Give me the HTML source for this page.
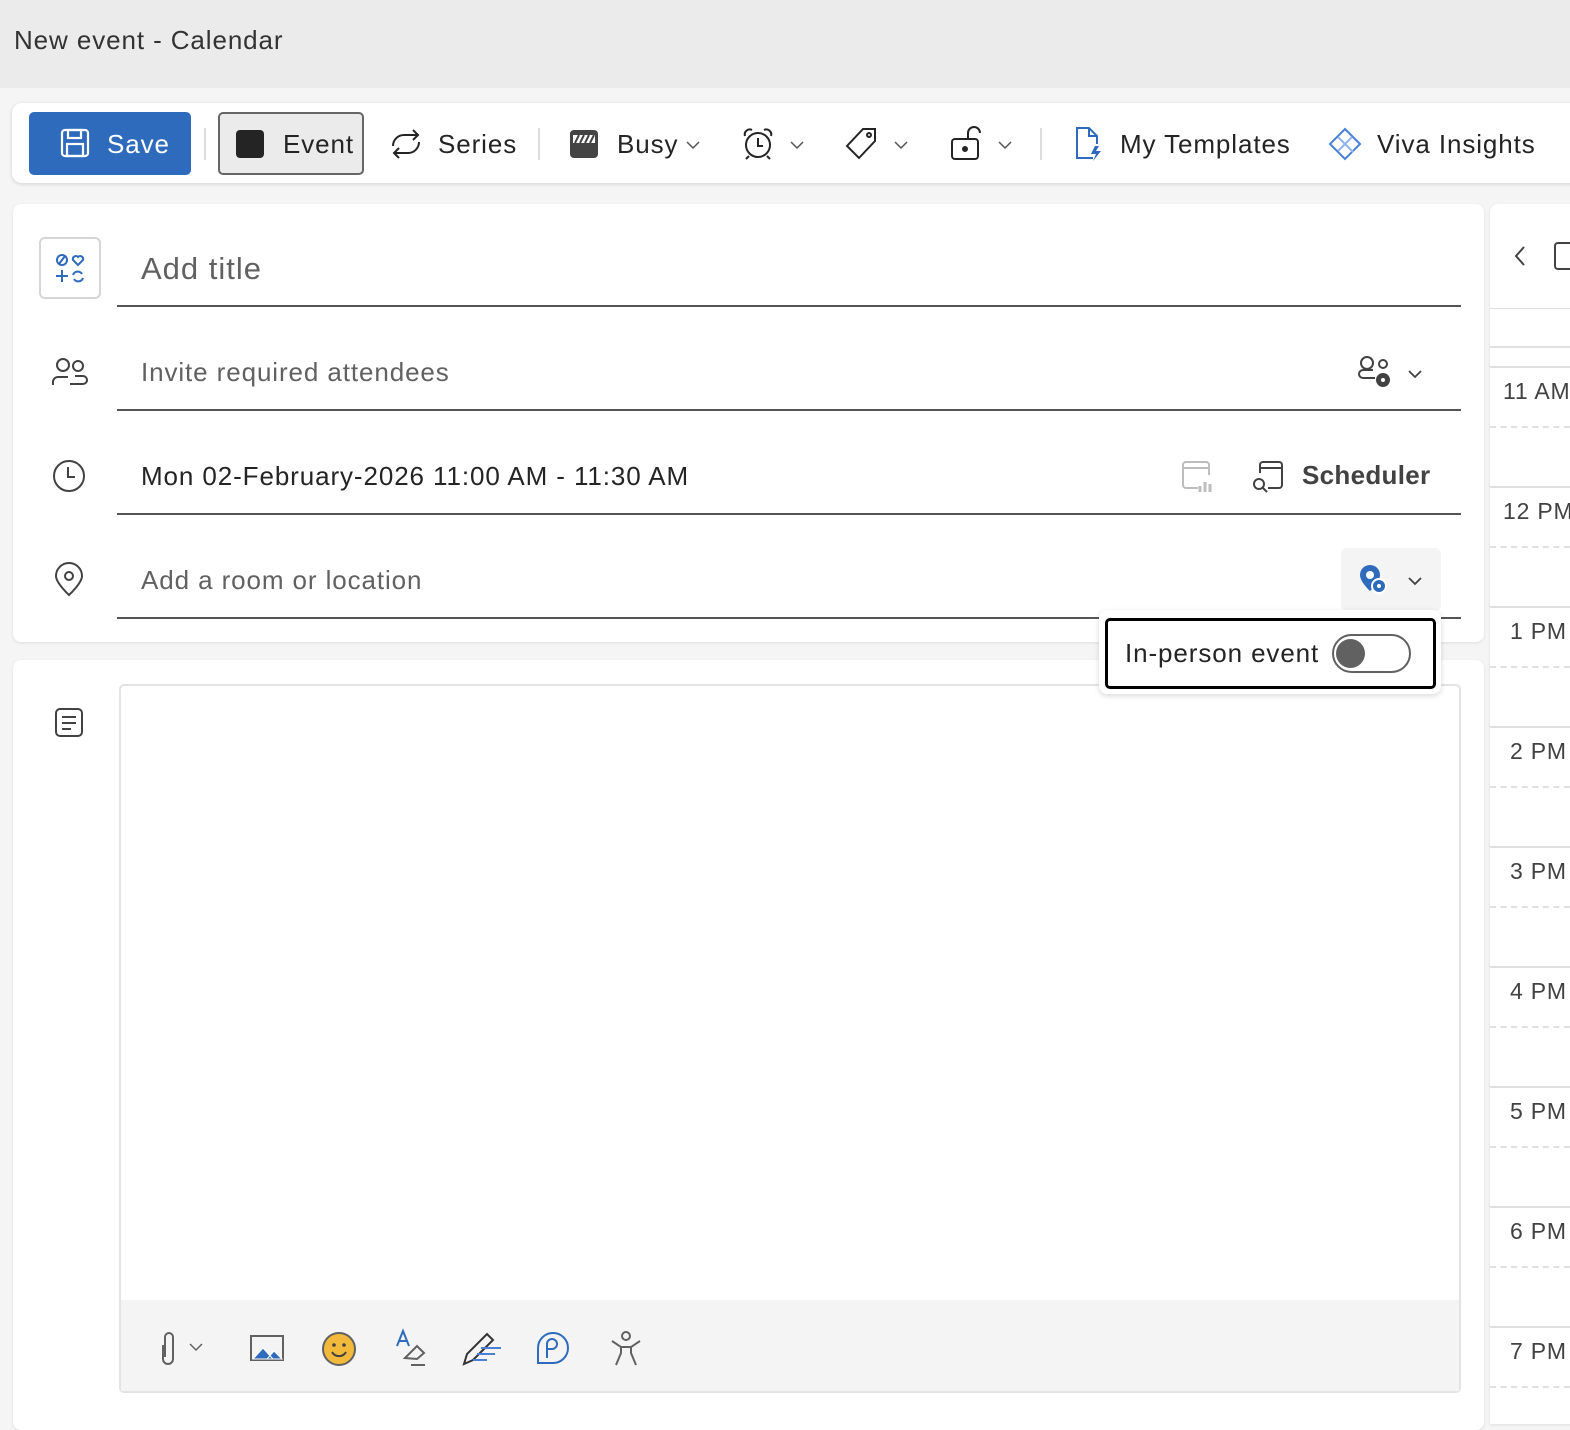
<!DOCTYPE html>
<html><head><meta charset="utf-8"><style>
*{box-sizing:border-box;margin:0;padding:0}
body{width:1570px;height:1414px;overflow:hidden;background:#f5f5f5;font-family:"Liberation Sans",sans-serif;position:relative;color:#242424}
.a{position:absolute}
.t{font-size:26px;white-space:nowrap;letter-spacing:0.9px}
svg{position:absolute;overflow:visible}
</style></head><body>
<div class="a" style="left:0;top:0;width:1570px;height:88px;background:#ebebeb"></div>
<div class="a t" style="left:14px;top:25px;color:#333">New event - Calendar</div>

<div class="a" style="left:12px;top:103px;width:1570px;height:80px;background:#fff;border-radius:10px;box-shadow:0 1px 4px rgba(0,0,0,.15)"></div>
<div class="a" style="left:29px;top:112px;width:162px;height:63px;background:#2f6bbd;border-radius:5px"></div>
<svg style="left:60px;top:128px" width="30" height="30" fill="none" stroke="#fff" stroke-width="2.2"><rect x="2" y="2" width="26" height="26" rx="3"/><rect x="8" y="2" width="13" height="8"/><rect x="7" y="16" width="16" height="12"/></svg>
<div class="a t" style="left:107px;top:129px;color:#fff">Save</div>
<div class="a" style="left:204px;top:128px;width:2px;height:32px;background:#ddd"></div>
<div class="a" style="left:218px;top:112px;width:146px;height:63px;background:#ebebeb;border:2px solid #666;border-radius:5px"></div>
<div class="a" style="left:236px;top:130px;width:28px;height:28px;background:#242424;border-radius:4px"></div>
<div class="a t" style="left:283px;top:129px">Event</div>
<svg style="left:389px;top:128px" width="34" height="32" fill="none" stroke="#242424" stroke-width="2"><path d="M4 18a11 11 0 0 1 11-11h14M24 2l5 5-5 5M30 14a11 11 0 0 1-11 11H5M10 30l-5-5 5-5"/></svg>
<div class="a t" style="left:438px;top:129px">Series</div>
<div class="a" style="left:538px;top:128px;width:2px;height:32px;background:#ddd"></div>
<svg style="left:569px;top:129px" width="30" height="30"><rect x="1" y="1" width="28" height="28" rx="4" fill="#444"/><rect x="4" y="6" width="22" height="8" fill="#fff"/><path d="M6 14l4-8M11 14l4-8M16 14l4-8M21 14l4-8" stroke="#444" stroke-width="2"/></svg>
<div class="a t" style="left:617px;top:129px">Busy</div>
<svg style="left:686px;top:140px" width="14" height="10" fill="none" stroke="#555" stroke-width="1.5"><path d="M1 2l6 6 6-6"/></svg>
<svg style="left:741px;top:127px" width="34" height="34" fill="none" stroke="#242424" stroke-width="2"><circle cx="17" cy="18" r="12"/><path d="M17 11v8h5M4 9a5 5 0 0 1 7-6M30 9a5 5 0 0 0-7-6M8 29l-3 3M26 29l3 3"/></svg>
<svg style="left:790px;top:140px" width="14" height="10" fill="none" stroke="#555" stroke-width="1.5"><path d="M1 2l6 6 6-6"/></svg>
<svg style="left:845px;top:127px" width="34" height="34" fill="none" stroke="#242424" stroke-width="2"><path d="M18 2h12v12L14 31 2 19z"/><circle cx="24" cy="8" r="2"/></svg>
<svg style="left:894px;top:140px" width="14" height="10" fill="none" stroke="#555" stroke-width="1.5"><path d="M1 2l6 6 6-6"/></svg>
<svg style="left:950px;top:125px" width="32" height="36" fill="none" stroke="#242424" stroke-width="2"><rect x="2" y="14" width="26" height="20" rx="3"/><path d="M18 14V8a6 6 0 0 1 12 0"/><circle cx="15" cy="24" r="2" fill="#242424"/></svg>
<svg style="left:998px;top:140px" width="14" height="10" fill="none" stroke="#555" stroke-width="1.5"><path d="M1 2l6 6 6-6"/></svg>
<div class="a" style="left:1040px;top:128px;width:2px;height:32px;background:#ddd"></div>
<svg style="left:1073px;top:126px" width="30" height="36" fill="none" stroke="#2f6bbd" stroke-width="2"><path d="M20 32H4V2h12l8 8v8M16 2v8h8"/><path d="M22 20l-4 8h5l-3 7 8-10h-5l3-5z" fill="#2f6bbd" stroke="none"/></svg>
<div class="a t" style="left:1120px;top:129px">My Templates</div>
<svg style="left:1328px;top:127px" width="34" height="34" fill="none" stroke="#4a7fd9" stroke-width="2"><path d="M17 2l15 15-15 15L2 17z"/><path d="M10 10l15 15M24 10L10 24" stroke="#8fb3ee"/></svg>
<div class="a t" style="left:1377px;top:129px">Viva Insights</div>

<div class="a" style="left:13px;top:204px;width:1471px;height:438px;background:#fff;border-radius:8px;box-shadow:0 1px 3px rgba(0,0,0,.1)"></div>
<div class="a" style="left:39px;top:237px;width:62px;height:62px;border:2px solid #d6d6d6;border-radius:6px"></div>
<svg style="left:54px;top:252px" width="32" height="32" fill="none" stroke="#2f6bbd" stroke-width="2"><circle cx="8" cy="8" r="5"/><path d="M5 12l6-8"/><path d="M24 13l-5-5a3 3 0 0 1 5-3 3 3 0 0 1 5 3z"/><path d="M8 18v12M2 24h12M19 23a5 5 0 0 1 9-1M29 26a5 5 0 0 1-9 1"/></svg>
<div class="a" style="left:141px;top:251px;font-size:31px;color:#616161;letter-spacing:1px">Add title</div>
<div class="a" style="left:117px;top:305px;width:1344px;height:2px;background:#555"></div>

<svg style="left:52px;top:357px" width="36" height="30" fill="none" stroke="#424242" stroke-width="2"><circle cx="11" cy="8" r="6"/><path d="M1 28v-3a5 5 0 0 1 5-5h10"/><circle cx="26" cy="9" r="5"/><path d="M18 27h13a4 4 0 0 0 0-8h-8"/></svg>
<div class="a t" style="left:141px;top:357px;color:#616161">Invite required attendees</div>
<svg style="left:1357px;top:356px" width="36" height="32" fill="none" stroke="#424242" stroke-width="2"><circle cx="10" cy="7" r="6"/><circle cx="26" cy="8" r="4"/><path d="M18 22H6a4 4 0 0 1 0-8h10"/><circle cx="26" cy="24" r="6" fill="#424242"/><circle cx="26" cy="24" r="2" fill="#fff" stroke="none"/></svg>
<svg style="left:1408px;top:369px" width="14" height="10" fill="none" stroke="#424242" stroke-width="1.8"><path d="M1 2l6 6 6-6"/></svg>
<div class="a" style="left:117px;top:409px;width:1344px;height:2px;background:#555"></div>

<svg style="left:52px;top:459px" width="34" height="34" fill="none" stroke="#424242" stroke-width="2"><circle cx="17" cy="17" r="15"/><path d="M16 8v10h7"/></svg>
<div class="a t" style="left:141px;top:461px">Mon 02-February-2026 11:00 AM - 11:30 AM</div>
<svg style="left:1182px;top:461px" width="32" height="32" fill="none" stroke="#bdbdbd" stroke-width="2"><path d="M16 27H4a3 3 0 0 1-3-3V4a3 3 0 0 1 3-3h20a3 3 0 0 1 3 3v10M1 7h26"/><path d="M18 31v-6M23 31v-10M28 31v-8" stroke-width="3"/></svg>
<svg style="left:1252px;top:461px" width="32" height="32" fill="none" stroke="#424242" stroke-width="2"><path d="M8 12V4a3 3 0 0 1 3-3h16a3 3 0 0 1 3 3v20a3 3 0 0 1-3 3H16M8 7h22"/><circle cx="7" cy="23" r="5"/><path d="M11 27l4 4"/></svg>
<div class="a t" style="left:1302px;top:460px;font-weight:bold;color:#424242;letter-spacing:0.3px">Scheduler</div>
<div class="a" style="left:117px;top:513px;width:1344px;height:2px;background:#555"></div>

<svg style="left:54px;top:563px" width="30" height="34" fill="none" stroke="#424242" stroke-width="2"><path d="M15 32S2 20 2 13a13 13 0 0 1 26 0c0 7-13 19-13 19z"/><circle cx="15" cy="13" r="4"/></svg>
<div class="a t" style="left:141px;top:565px;color:#616161">Add a room or location</div>
<div class="a" style="left:1341px;top:548px;width:100px;height:63px;background:#f4f4f4;border-radius:6px"></div>
<svg style="left:1360px;top:564px" width="36" height="36"><path d="M10 1a10 10 0 0 0-10 10c0 7 10 16 10 16s10-9 10-16A10 10 0 0 0 10 1z" fill="#2f6bbd"/><circle cx="10" cy="11" r="4" fill="#fff"/><circle cx="19" cy="22" r="8" fill="#fff"/><circle cx="19" cy="22" r="6" fill="#2f6bbd"/><circle cx="19" cy="22" r="2" fill="#fff"/></svg>
<svg style="left:1408px;top:576px" width="14" height="10" fill="none" stroke="#424242" stroke-width="1.8"><path d="M1 2l6 6 6-6"/></svg>
<div class="a" style="left:117px;top:617px;width:1344px;height:2px;background:#555"></div>

<div class="a" style="left:13px;top:660px;width:1471px;height:770px;background:#fff;border-radius:8px;box-shadow:0 1px 3px rgba(0,0,0,.1)"></div>
<svg style="left:55px;top:708px" width="28" height="30" fill="none" stroke="#424242" stroke-width="2"><rect x="1" y="1" width="26" height="27" rx="4"/><path d="M7 9h14M7 15h14M7 21h9"/></svg>
<div class="a" style="left:119px;top:684px;width:1342px;height:709px;border:2px solid #e3e3e3;border-radius:5px"></div>
<div class="a" style="left:121px;top:1300px;width:1338px;height:91px;background:#f4f4f4"></div>
<svg style="left:157px;top:1331px" width="52" height="36" fill="none" stroke="#616161" stroke-width="2"><path d="M6 14v14a5 5 0 0 0 10 0V6a4 4 0 0 0-8 0v20"/><path d="M33 13l6 6 6-6" stroke-width="1.5"/></svg>
<svg style="left:250px;top:1335px" width="36" height="28"><rect x="1" y="1" width="32" height="24" fill="none" stroke="#616161" stroke-width="2"/><path d="M3 24l10-11 10 11zM17 24l7-8 8 8z" fill="#2f6bbd" stroke="#fff" stroke-width="1"/></svg>
<svg style="left:321px;top:1331px" width="36" height="36"><circle cx="18" cy="18" r="16" fill="#f2b93b" stroke="#616161" stroke-width="2"/><circle cx="13" cy="14" r="1.8" fill="#424242"/><circle cx="23" cy="14" r="1.8" fill="#424242"/><path d="M11 21a8 8 0 0 0 14 0" fill="none" stroke="#424242" stroke-width="2"/></svg>
<svg style="left:395px;top:1330px" width="36" height="36" fill="none" stroke-width="2"><path d="M2 16l6-15 6 15M4 11h8" stroke="#2f6bbd"/><path d="M10 28l12-12 7 7-7 6z" stroke="#616161"/><path d="M16 35h14" stroke="#616161"/></svg>
<svg style="left:463px;top:1332px" width="40" height="34" fill="none" stroke-width="2"><path d="M1 32l3-10L24 2l6 6-20 20z" stroke="#333"/><path d="M18 16h20M14 22h18M10 28h14" stroke="#4a7fd9"/></svg>
<svg style="left:535px;top:1330px" width="36" height="36" fill="none" stroke="#2f6bbd" stroke-width="2"><path d="M3 33V18a15 15 0 1 1 15 15z"/><path d="M12 28V14a5 5 0 1 1 5 5h-5"/></svg>
<svg style="left:610px;top:1331px" width="32" height="36" fill="none" stroke="#616161" stroke-width="2"><circle cx="16" cy="5" r="4"/><path d="M2 10l9 6v6l-5 12M30 10l-9 6v6l5 12M11 16h10"/></svg>

<div class="a" style="left:1490px;top:204px;width:90px;height:1220px;background:#fff;border-radius:8px 0 0 0;box-shadow:0 1px 3px rgba(0,0,0,.1)"></div>
<svg style="left:1513px;top:245px" width="14" height="22" fill="none" stroke="#424242" stroke-width="2"><path d="M11 2L3 11l8 9"/></svg>
<div class="a" style="left:1554px;top:242px;width:24px;height:28px;border:2px solid #424242;border-radius:4px"></div>
<div class="a" style="left:1490px;top:308px;width:80px;height:1px;background:#e0e0e0"></div>
<div class="a" style="left:1490px;top:346px;width:80px;height:2px;background:#e0e0e0"></div>
<div id="cal"></div>
<div class="a" style="left:1099px;top:610px;width:342px;height:84px;background:#fff;border-radius:8px;box-shadow:0 2px 6px rgba(0,0,0,.15)"></div>
<div class="a" style="left:1105px;top:618px;width:331px;height:71px;border:3px solid #000;border-radius:5px"></div>
<div class="a t" style="left:1125px;top:638px">In-person event</div>
<div class="a" style="left:1332px;top:634px;width:79px;height:39px;border:2px solid #616161;border-radius:20px"></div>
<div class="a" style="left:1336px;top:639px;width:29px;height:29px;background:#616161;border-radius:50%"></div>
<script>
var h=['11 AM','12 PM','1 PM','2 PM','3 PM','4 PM','5 PM','6 PM','7 PM'],s='';
for(var i=0;i<9;i++){var y=367+i*120;
s+='<div class="a" style="left:1490px;top:'+(y-1)+'px;width:80px;height:2px;background:#e0e0e0"></div>';
s+='<div class="a" style="left:1490px;top:'+(y+59)+'px;width:80px;border-top:2px dashed #e0e0e0"></div>';
s+='<div class="a" style="left:'+(h[i].length>4?1503:1510)+'px;top:'+(y+11)+'px;font-size:23px;color:#424242;white-space:nowrap;letter-spacing:0.8px">'+h[i]+'</div>';}
document.getElementById('cal').innerHTML=s;
</script>
</body></html>
